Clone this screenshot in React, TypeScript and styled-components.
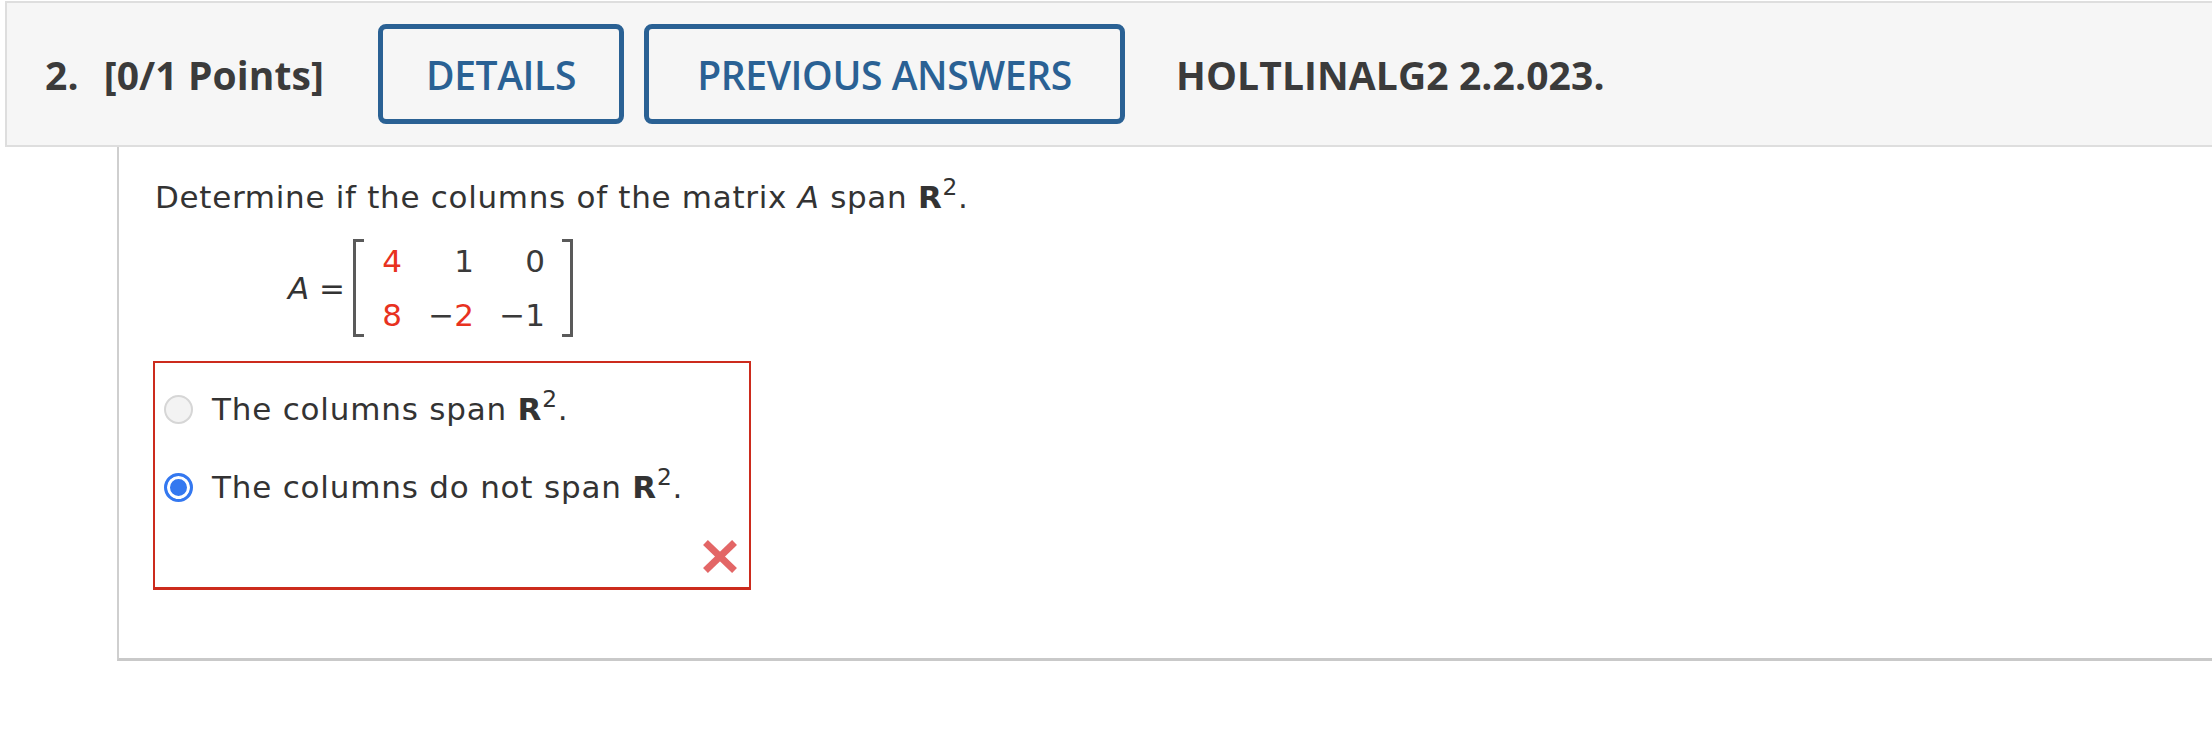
import React from "react";
import styled, { createGlobalStyle } from "styled-components";

const GlobalStyle = createGlobalStyle`
  html, body {
    margin: 0;
    padding: 0;
    background: #ffffff;
  }
  body {
    font-family: "DejaVu Sans", Verdana, sans-serif;
    color: #333333;
    overflow: hidden;
  }
`;

const Page = styled.div`
  width: 2212px;
  height: 732px;
  padding-top: 1px;
  box-sizing: border-box;
`;

const Header = styled.div`
  margin-left: 5px;
  height: 146px;
  box-sizing: border-box;
  display: flex;
  align-items: center;
  padding-left: 38px;
  background: #f6f6f6;
  border: 2px solid #dedede;
  border-right: none;
  font-family: "Open Sans", "Liberation Sans", sans-serif;
  font-weight: 700;
  font-size: 39px;
  letter-spacing: 0.1px;
  color: #3b3b3b;
`;

const Num = styled.span`
  margin-right: 25px;
`;

const Points = styled.span`
  margin-right: 54px;
`;

const HeaderButton = styled.div<{ $w: number }>`
  width: ${(p) => p.$w}px;
  height: 100px;
  box-sizing: border-box;
  border: 5px solid #2a6194;
  border-radius: 8px;
  display: flex;
  align-items: center;
  justify-content: center;
  color: #2a6194;
  font-weight: 600;
  letter-spacing: -0.4px;
  margin-right: 20px;
`;

const Ref = styled.span`
  margin-left: 31px;
`;

const Panel = styled.div`
  margin-left: 117px;
  height: 514px;
  box-sizing: border-box;
  border-left: 2px solid #cfcfcf;
  border-bottom: 3px solid #c9c9c9;
  padding: 30px 0 0 36px;
  font-size: 31px;
`;

const Prompt = styled.p`
  margin: 0;
  line-height: 40px;
  letter-spacing: 0.7px;
`;

const Bold = styled.b`
  font-weight: 700;
`;

const Sup = styled.sup`
  font-size: 0.75em;
  line-height: 0;
  vertical-align: 0.55em;
`;

const MatrixRow = styled.div`
  display: flex;
  align-items: center;
  margin: 22px 0 0 133px;
`;

const Label = styled.span`
  margin-right: 8px;
  white-space: pre;
`;

const Var = styled.i`
  font-style: italic;
`;

const Bracket = styled.div<{ $side: "left" | "right" }>`
  width: 8px;
  height: 92px;
  border: 3px solid #5a5a5a;
  ${(p) => (p.$side === "left" ? "border-right: none;" : "border-left: none;")}
`;

const Cells = styled.div`
  display: grid;
  grid-template-columns: 38px 72px 71px;
  row-gap: 14px;
  padding: 0 17px 0 0;
  line-height: 40px;
`;

const Cell = styled.span<{ $wrong?: boolean }>`
  text-align: right;
  color: ${(p) => (p.$wrong ? "#e8321f" : "#3a3a3a")};
`;

const Wrong = styled.span`
  color: #e8321f;
`;

const AnswerBox = styled.div`
  margin: 24px 0 0 -2px;
  width: 598px;
  box-sizing: border-box;
  border: 2px solid #cc2b1d;
  border-bottom-width: 3px;
  padding: 21px 0 14px 9px;
`;

const Option = styled.label`
  display: flex;
  align-items: center;
  height: 50px;
  letter-spacing: 0.8px;
  & + & {
    margin-top: 28px;
  }
`;

const Radio = styled.span<{ $checked?: boolean }>`
  width: 29px;
  height: 29px;
  box-sizing: border-box;
  border-radius: 50%;
  margin-right: 19px;
  flex: none;
  ${(p) =>
    p.$checked
      ? `border: 3px solid #3478f0;
         background: #3478f0;
         box-shadow: inset 0 0 0 3px #ffffff;`
      : `border: 2px solid #d6d6d6;
         background: #f3f3f3;`}
`;

const Mark = styled.div`
  display: flex;
  justify-content: flex-end;
  padding-right: 12px;
  margin-top: 28px;
`;

const Cross = () => (
  <svg width="34" height="33" viewBox="0 0 34 33">
    <g stroke="#e05656" strokeWidth="7" strokeLinecap="square" opacity="0.9">
      <line x1="5" y1="5" x2="29" y2="28" />
      <line x1="29" y1="5" x2="5" y2="28" />
    </g>
  </svg>
);

const R2 = () => (
  <>
    <Bold>R</Bold>
    <Sup>2</Sup>.
  </>
);

export default function App() {
  return (
    <Page>
      <GlobalStyle />
      <Header>
        <Num>2.</Num>
        <Points>[0/1 Points]</Points>
        <HeaderButton $w={246}>DETAILS</HeaderButton>
        <HeaderButton $w={481}>PREVIOUS ANSWERS</HeaderButton>
        <Ref>HOLTLINALG2 2.2.023.</Ref>
      </Header>
      <Panel>
        <Prompt>
          Determine if the columns of the matrix <Var>A</Var> span <R2 />
        </Prompt>
        <MatrixRow>
          <Label>
            <Var>A</Var> =
          </Label>
          <Bracket $side="left" />
          <Cells>
            <Cell $wrong>4</Cell>
            <Cell>1</Cell>
            <Cell>0</Cell>
            <Cell $wrong>8</Cell>
            <Cell>
              −<Wrong>2</Wrong>
            </Cell>
            <Cell>−1</Cell>
          </Cells>
          <Bracket $side="right" />
        </MatrixRow>
        <AnswerBox>
          <Option>
            <Radio />
            <span>
              The columns span <R2 />
            </span>
          </Option>
          <Option>
            <Radio $checked />
            <span>
              The columns do not span <R2 />
            </span>
          </Option>
          <Mark>
            <Cross />
          </Mark>
        </AnswerBox>
      </Panel>
    </Page>
  );
}
